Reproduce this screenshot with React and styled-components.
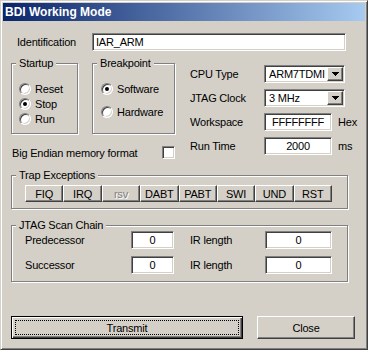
import React from 'react';
import styled, { createGlobalStyle, css } from 'styled-components';

const face = '#D4D0C8';
const shadow = '#808080';
const darkShadow = '#404040';

const GlobalStyle = createGlobalStyle`
  html, body {
    margin: 0;
    padding: 0;
    background: ${face};
  }
  * {
    box-sizing: border-box;
  }
`;

const sunken = css`
  border: 1px solid;
  border-color: ${shadow} #fff #fff ${shadow};
  box-shadow: inset 1px 1px ${darkShadow}, inset -1px -1px ${face};
  background: #fff;
`;

const raised = css`
  border: 1px solid;
  border-color: #fff ${darkShadow} ${darkShadow} #fff;
  box-shadow: inset -1px -1px ${shadow};
  background: ${face};
`;

const App = () => {
  return (
    <>
      <GlobalStyle />
      <Window>
        <TitleBar>
          <Title>BDI Working Mode</Title>
        </TitleBar>
        <Body>
          <IdRow>
            <Label $w={75}>Identification</Label>
            <TextField $w={254} $align="left">IAR_ARM</TextField>
          </IdRow>

          <MainRow>
            <LeftCol>
              <GroupRow>
                <Group $w={67} $h={77}>
                  <Legend>Startup</Legend>
                  <RadioList $pad={7} $gap={0}>
                    <RadioItem>
                      <Radio />
                      Reset
                    </RadioItem>
                    <RadioItem>
                      <Radio $checked />
                      Stop
                    </RadioItem>
                    <RadioItem>
                      <Radio />
                      Run
                    </RadioItem>
                  </RadioList>
                </Group>
                <Group $w={83} $h={77}>
                  <Legend>Breakpoint</Legend>
                  <RadioList $pad={8} $gap={8}>
                    <RadioItem>
                      <Radio $checked />
                      Software
                    </RadioItem>
                    <RadioItem>
                      <Radio />
                      Hardware
                    </RadioItem>
                  </RadioList>
                </Group>
              </GroupRow>
              <CheckRow>
                <span>Big Endian memory format</span>
                <CheckBox />
              </CheckRow>
            </LeftCol>

            <FieldGrid>
              <FieldLabel>CPU Type</FieldLabel>
              <Select>
                <SelectValue>ARM7TDMI</SelectValue>
                <DropButton>
                  <svg width="7" height="4" viewBox="0 0 7 4" shapeRendering="crispEdges">
                    <polygon points="0,0 7,0 3.5,4" fill="#000" />
                  </svg>
                </DropButton>
              </Select>
              <FieldLabel>JTAG Clock</FieldLabel>
              <Select>
                <SelectValue>3 MHz</SelectValue>
                <DropButton>
                  <svg width="7" height="4" viewBox="0 0 7 4" shapeRendering="crispEdges">
                    <polygon points="0,0 7,0 3.5,4" fill="#000" />
                  </svg>
                </DropButton>
              </Select>
              <FieldLabel>Workspace</FieldLabel>
              <TextField $w={68}>FFFFFFFF</TextField>
              <Suffix>Hex</Suffix>
              <FieldLabel>Run Time</FieldLabel>
              <TextField $w={68}>2000</TextField>
              <Suffix>ms</Suffix>
            </FieldGrid>
          </MainRow>

          <Group $w={337} $h={40} $top={10}>
            <Legend>Trap Exceptions</Legend>
            <TrapButtons>
              <TrapButton>FIQ</TrapButton>
              <TrapButton>IRQ</TrapButton>
              <TrapButton $disabled>rsv</TrapButton>
              <TrapButton>DABT</TrapButton>
              <TrapButton>PABT</TrapButton>
              <TrapButton>SWI</TrapButton>
              <TrapButton>UND</TrapButton>
              <TrapButton>RST</TrapButton>
            </TrapButtons>
          </Group>

          <Group $w={337} $h={63} $top={10}>
            <Legend>JTAG Scan Chain</Legend>
            <ChainGrid>
              <Label>Predecessor</Label>
              <TextField $w={43}>0</TextField>
              <Label>IR length</Label>
              <TextField $w={67}>0</TextField>
              <Label>Successor</Label>
              <TextField $w={43}>0</TextField>
              <Label>IR length</Label>
              <TextField $w={67}>0</TextField>
            </ChainGrid>
          </Group>

          <ButtonRow>
            <PushButton $w={232} $default>
              <FocusRing>Transmit</FocusRing>
            </PushButton>
            <PushButton $w={98}>Close</PushButton>
          </ButtonRow>
        </Body>
      </Window>
    </>
  );
};

export default App;

const Window = styled.div`
  width: 368px;
  height: 350px;
  padding: 1px;
  background: ${face};
  border: 1px solid;
  border-color: ${face} ${darkShadow} ${darkShadow} ${face};
  box-shadow: inset 1px 1px #fff, inset -1px -1px ${shadow};
  font-family: 'Liberation Sans', Arial, sans-serif;
  font-size: 11px;
  letter-spacing: -0.2px;
  color: #000;
  display: flex;
  flex-direction: column;
`;

const TitleBar = styled.div`
  height: 18px;
  margin: 1px;
  padding-left: 2px;
  display: flex;
  align-items: center;
  background: linear-gradient(to right, #0a246a, #a6caf0);
`;

const Title = styled.span`
  color: #fff;
  font-weight: bold;
  font-size: 12px;
  letter-spacing: 0;
`;

const Body = styled.div`
  padding: 11px 0 0 9px;
  display: flex;
  flex-direction: column;
`;

const IdRow = styled.div`
  display: flex;
  align-items: center;
  height: 18px;
  padding-left: 6px;
`;

const Label = styled.span`
  width: ${(p) => (p.$w ? `${p.$w}px` : 'auto')};
  white-space: nowrap;
`;

const TextField = styled.div`
  ${sunken}
  width: ${(p) => p.$w}px;
  height: 18px;
  line-height: 16px;
  padding: 0 3px;
  text-align: ${(p) => p.$align || 'center'};
  white-space: nowrap;
  overflow: hidden;
`;

const MainRow = styled.div`
  display: flex;
  align-items: flex-start;
  margin-top: 6px;
`;

const LeftCol = styled.div`
  width: 164px;
  display: flex;
  flex-direction: column;
`;

const GroupRow = styled.div`
  display: flex;
  gap: 14px;
`;

const Group = styled.fieldset`
  margin: ${(p) => p.$top || 0}px 0 0 0;
  padding: 0;
  min-width: 0;
  width: ${(p) => p.$w}px;
  height: ${(p) => p.$h}px;
  border: 1px solid ${shadow};
  box-shadow: inset 1px 1px #fff, 1px 1px #fff;
`;

const Legend = styled.legend`
  margin-left: 4px;
  padding: 0 3px;
  line-height: 12px;
  background: ${face};
`;

const RadioList = styled.div`
  display: flex;
  flex-direction: column;
  gap: ${(p) => p.$gap}px;
  padding-left: ${(p) => p.$pad}px;
  margin-top: 12px;
`;

const RadioItem = styled.div`
  display: flex;
  align-items: center;
  gap: 4px;
  height: 15px;
`;

const Radio = styled.span`
  width: 12px;
  height: 12px;
  flex: none;
  border-radius: 50%;
  border: 1px solid;
  border-color: ${shadow} #fff #fff ${shadow};
  box-shadow: inset 1px 1px ${darkShadow}, inset -1px -1px ${face};
  background: #fff;
  display: flex;
  align-items: center;
  justify-content: center;

  &::after {
    content: '';
    width: 4px;
    height: 4px;
    border-radius: 50%;
    background: #000;
    display: ${(p) => (p.$checked ? 'block' : 'none')};
  }
`;

const CheckRow = styled.div`
  display: flex;
  align-items: center;
  justify-content: space-between;
  margin-top: 12px;
  padding-left: 1px;
  height: 13px;
`;

const CheckBox = styled.span`
  ${sunken}
  width: 13px;
  height: 13px;
`;

const FieldGrid = styled.div`
  display: grid;
  grid-template-columns: 74px 68px auto;
  grid-auto-rows: 18px;
  row-gap: 6px;
  align-items: center;
  margin-left: 15px;
  margin-top: 8px;
`;

const FieldLabel = styled.span`
  white-space: nowrap;
`;

const Suffix = styled.span`
  padding-left: 6px;
`;

const Select = styled.div`
  ${sunken}
  grid-column: span 2;
  width: 81px;
  height: 18px;
  padding: 1px;
  display: flex;
  align-items: center;
`;

const SelectValue = styled.span`
  flex: 1;
  padding-left: 3px;
  white-space: nowrap;
  overflow: hidden;
`;

const DropButton = styled.span`
  ${raised}
  width: 16px;
  height: 14px;
  flex: none;
  display: flex;
  align-items: center;
  justify-content: center;
`;

const TrapButtons = styled.div`
  display: flex;
  width: 307px;
  height: 17px;
  margin: 4px 0 0 13px;
`;

const TrapButton = styled.div`
  ${raised}
  flex: 1;
  display: flex;
  align-items: center;
  justify-content: center;
  color: ${(p) => (p.$disabled ? shadow : '#000')};
  text-shadow: ${(p) => (p.$disabled ? '1px 1px #fff' : 'none')};
`;

const ChainGrid = styled.div`
  display: grid;
  grid-template-columns: 106px 43px 16px 75px 67px;
  grid-auto-rows: 18px;
  row-gap: 7px;
  align-items: center;
  padding-left: 13px;

  & > :nth-child(4n + 3) {
    grid-column: 4;
  }
`;

const ButtonRow = styled.div`
  display: flex;
  gap: 14px;
  margin-top: 34px;
`;

const PushButton = styled.div`
  width: ${(p) => p.$w}px;
  height: 23px;
  display: flex;
  align-items: center;
  justify-content: center;
  background: ${face};
  ${(p) =>
    p.$default
      ? css`
          border: 1px solid #000;
          box-shadow: inset 1px 1px #fff, inset -1px -1px ${darkShadow}, inset -2px -2px ${shadow};
          padding: 3px;
          align-items: stretch;
        `
      : css`
          border: 1px solid;
          border-color: #fff ${darkShadow} ${darkShadow} #fff;
          box-shadow: inset -1px -1px ${shadow};
        `}
`;

const FocusRing = styled.span`
  flex: 1;
  border: 1px dotted #000;
  display: flex;
  align-items: center;
  justify-content: center;
`;
